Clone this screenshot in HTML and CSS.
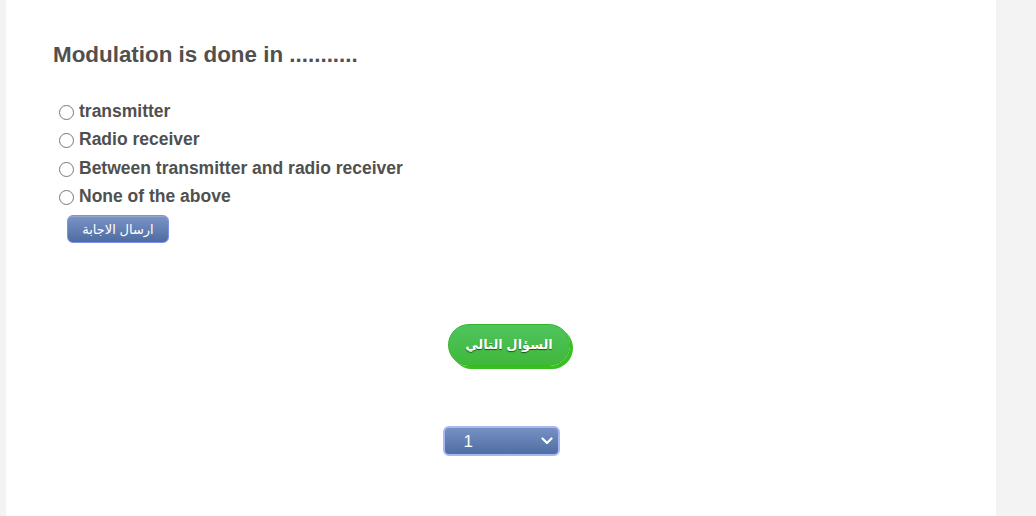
FILE: index.html
```html
<!DOCTYPE html>
<html lang="en">
<head>
<meta charset="utf-8">
<title>Quiz</title>
<link rel="stylesheet" href="styles.css">
</head>
<body>
<div class="panel">
  <div class="quiz">
    <h1 class="question">Modulation is done in ...........</h1>
    <form class="options">
      <label class="option"><input type="radio" name="a"><span>transmitter</span></label>
      <label class="option"><input type="radio" name="a"><span>Radio receiver</span></label>
      <label class="option"><input type="radio" name="a"><span>Between transmitter and radio receiver</span></label>
      <label class="option"><input type="radio" name="a"><span>None of the above</span></label>
      <button type="button" class="submit" dir="rtl">ارسال الاجابة</button>
    </form>
  </div>
  <div class="nav">
    <button type="button" class="next" dir="rtl">السؤال التالي</button>
    <div class="select-wrap">
      <select class="qselect"><option>1</option><option>2</option><option>3</option></select>
      <svg class="chev" width="12" height="8" viewBox="0 0 12 8"><path d="M1.5 1.5 L6 6 L10.5 1.5" fill="none" stroke="#fff" stroke-width="2.2" stroke-linecap="round" stroke-linejoin="round"/></svg>
    </div>
  </div>
</div>
</body>
</html>
```
FILE: styles.css
```css
html, body {
  margin: 0;
  padding: 0;
  background: #f3f3f3;
  height: 100%;
}
body {
  font-family: "Liberation Sans", Arial, sans-serif;
}
.panel {
  margin-left: 6px;
  width: 990px;
  height: 516px;
  background: #fff;
  box-sizing: border-box;
  padding-top: 42px;
}
.quiz {
  padding-left: 47px;
}
.question {
  margin: 0;
  font-size: 22.4px;
  line-height: 26px;
  font-weight: bold;
  color: #505050;
}
.options {
  margin: 29px 0 0 0;
  display: flex;
  flex-direction: column;
  align-items: flex-start;
}
.option {
  display: flex;
  align-items: center;
  height: 28.5px;
  font-size: 17.5px;
  font-weight: bold;
  color: #505050;
  cursor: pointer;
}
.option input {
  appearance: none;
  -webkit-appearance: none;
  box-sizing: border-box;
  margin: 2px 5px 0 6px;
  width: 15px;
  height: 15px;
  border: 1px solid #777;
  border-radius: 50%;
  background: #fff;
}
.option input:checked {
  background: radial-gradient(circle, #3b6fd6 0 3px, #fff 3.5px);
}
.submit {
  margin: 4px 0 0 14px;
  width: 102px;
  height: 28px;
  border: 1px solid #7e8fe6;
  border-radius: 6px;
  background: linear-gradient(#7b93c6, #4e6ca2);
  color: #fff;
  font-family: "Liberation Sans", Arial, "DejaVu Sans", sans-serif;
  font-size: 13px;
  padding: 0;
  box-shadow: inset 0 1px 0 rgba(255,255,255,0.2);
}
.nav {
  display: flex;
  flex-direction: column;
  align-items: center;
  margin-top: 81px;
}
.next {
  margin-left: 16px;
  width: 122px;
  height: 42px;
  border: 1px solid #36b52a;
  border-radius: 21px;
  background: linear-gradient(#4fc45e, #40b83a);
  box-shadow: 3px 3px 0 #37c020;
  color: #fff;
  font-family: "Liberation Sans", Arial, "DejaVu Sans", sans-serif;
  font-size: 13px;
  font-weight: bold;
  text-shadow: 0 1px 1px rgba(0,40,0,0.7);
  padding: 0 0 2px 0;
}
.select-wrap {
  position: relative;
  margin-top: 60px;
  width: 117px;
  height: 30px;
}
.qselect {
  appearance: none;
  -webkit-appearance: none;
  box-sizing: border-box;
  width: 117px;
  height: 30px;
  border: 2px solid #aab6f2;
  border-radius: 6px;
  background: linear-gradient(#7690c2, #4f6ea4);
  color: #fff;
  font-family: "Liberation Sans", Arial, sans-serif;
  font-size: 17px;
  padding: 0 0 0 19px;
  outline: none;
}
.qselect option {
  color: #000;
  background: #fff;
}
.chev {
  position: absolute;
  right: 7px;
  top: 11px;
  pointer-events: none;
}
```
